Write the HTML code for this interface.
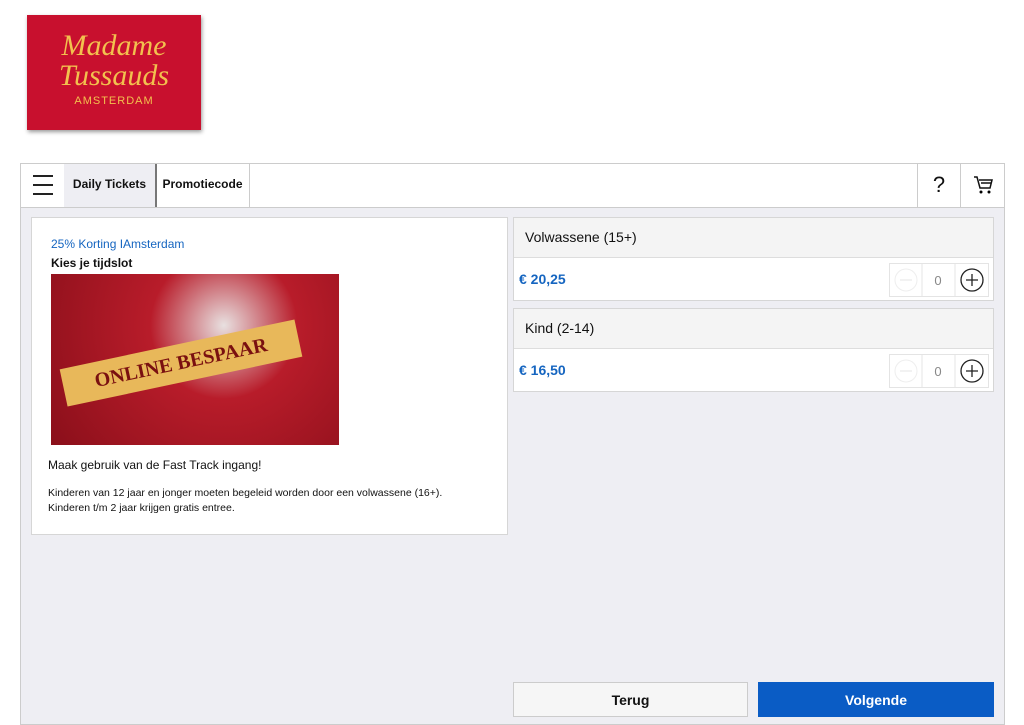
<!DOCTYPE html>
<html><head><style>
body{margin:0;width:1024px;height:721px;background:#fff;font-family:"Liberation Sans",sans-serif;position:relative;overflow:hidden;color:#111}
.a{position:absolute}
.logo{left:27px;top:15px;width:174px;height:115px;background:#c8102e;box-shadow:1px 2px 4px rgba(0,0,0,.4);color:#f2c14e;text-align:center;font-family:"Liberation Serif",serif}
.frame{left:20px;top:163px;width:983px;height:560px;border:1px solid #ccc;background:#eeeef3}
.hdr{left:0;top:0;width:983px;height:43px;background:#fff;border-bottom:1px solid #ccc}
.card{background:#fff;border:1px solid #d6d6d6}
.row{font-size:14px}
.price{color:#1565c0;font-weight:bold;font-size:14px}
.btn{height:33px;font-size:14px;font-weight:bold;display:flex;align-items:center;justify-content:center}
.qty{width:98px;height:32px;border:1px solid #e4e4e4}
</style></head><body>
<div class="a logo"><div style="font-size:30px;font-style:italic;margin-top:16px;line-height:30px">Madame<br>Tussauds</div><div style="font-family:'Liberation Sans';font-size:11px;letter-spacing:1px;margin-top:4px">AMSTERDAM</div></div>
<div class="a frame">
 <div class="a hdr">
  <div class="a" style="left:12px;top:11px;width:20px;height:2px;background:#222;box-shadow:0 9px 0 #222,0 18px 0 #222"></div>
  <div class="a" style="left:43px;top:0;width:91px;height:43px;background:#eeeef3;border-right:2px solid #777;font-size:12px;font-weight:bold;line-height:40px;text-align:center">Daily Tickets</div>
  <div class="a" style="left:135px;top:0;width:93px;height:43px;border-right:1px solid #ccc;font-size:12px;font-weight:bold;line-height:40px;text-align:center">Promotiecode</div>
  <div class="a" style="left:896px;top:0;width:42px;height:43px;border-left:1px solid #ccc;font-size:22px;line-height:42px;text-align:center">?</div>
  <div class="a" style="left:939px;top:0;width:44px;height:43px;border-left:1px solid #ccc">
   <svg width="44" height="43"><path d="M13 13h3l3 11h10l2-8H18M20 19h10" fill="none" stroke="#111" stroke-width="1.5"/><circle cx="20" cy="28" r="1.5"/><circle cx="28" cy="28" r="1.5"/></svg></div>
 </div>
 <div class="a card" style="left:10px;top:53px;width:475px;height:316px">
  <div class="a" style="left:19px;top:19px;font-size:12px;color:#1565c0">25% Korting IAmsterdam</div>
  <div class="a" style="left:19px;top:38px;font-size:12px;font-weight:bold">Kies je tijdslot</div>
  <div class="a" style="left:19px;top:56px;width:288px;height:171px;background:radial-gradient(circle at 60% 30%,#e8e0e0 0,#b81c2a 35%,#8a0f1a 100%);overflow:hidden">
   <div class="a" style="left:10px;top:70px;width:240px;height:38px;background:#e8b85a;transform:rotate(-12deg);font-family:'Liberation Serif';font-weight:bold;font-size:20px;color:#7a1010;text-align:center;line-height:38px">ONLINE BESPAAR</div>
  </div>
  <div class="a" style="left:16px;top:240px;font-size:12px">Maak gebruik van de Fast Track ingang!</div>
  <div class="a" style="left:16px;top:268px;font-size:10.5px;line-height:15px">Kinderen van 12 jaar en jonger moeten begeleid worden door een volwassene (16+).<br>Kinderen t/m 2 jaar krijgen gratis entree.</div>
 </div>
 <div class="a card" style="left:492px;top:53px;width:479px;height:82px">
  <div style="height:39px;background:#f4f4f4;border-bottom:1px solid #ddd;line-height:39px;padding-left:11px" class="row">Volwassene (15+)</div>
  <div class="a price" style="left:5px;top:53px">€ 20,25</div>
  <div class="a qty" style="left:375px;top:45px"><svg width="98" height="32"><circle cx="16" cy="16" r="11" fill="none" stroke="#eee"/><path d="M10 16h12" stroke="#e4e4e4"/><line x1="32" y1="0" x2="32" y2="32" stroke="#e4e4e4"/><line x1="65" y1="0" x2="65" y2="32" stroke="#e4e4e4"/><text x="48" y="21" font-size="13" fill="#888" text-anchor="middle" font-family="Liberation Sans">0</text><circle cx="82" cy="16" r="11" fill="none" stroke="#222" stroke-width="1.3"/><path d="M76 16h12M82 10v12" stroke="#222" stroke-width="1.3"/></svg></div>
 </div>
 <div class="a card" style="left:492px;top:144px;width:479px;height:82px">
  <div style="height:39px;background:#f4f4f4;border-bottom:1px solid #ddd;line-height:39px;padding-left:11px" class="row">Kind (2-14)</div>
  <div class="a price" style="left:5px;top:53px">€ 16,50</div>
  <div class="a qty" style="left:375px;top:45px"><svg width="98" height="32"><circle cx="16" cy="16" r="11" fill="none" stroke="#eee"/><path d="M10 16h12" stroke="#e4e4e4"/><line x1="32" y1="0" x2="32" y2="32" stroke="#e4e4e4"/><line x1="65" y1="0" x2="65" y2="32" stroke="#e4e4e4"/><text x="48" y="21" font-size="13" fill="#888" text-anchor="middle" font-family="Liberation Sans">0</text><circle cx="82" cy="16" r="11" fill="none" stroke="#222" stroke-width="1.3"/><path d="M76 16h12M82 10v12" stroke="#222" stroke-width="1.3"/></svg></div>
 </div>
 <div class="a btn" style="left:492px;top:518px;width:233px;background:#f6f6f6;border:1px solid #ccc">Terug</div>
 <div class="a btn" style="left:737px;top:518px;width:236px;height:35px;background:#0a5cc5;color:#fff">Volgende</div>
</div>
</body></html>
